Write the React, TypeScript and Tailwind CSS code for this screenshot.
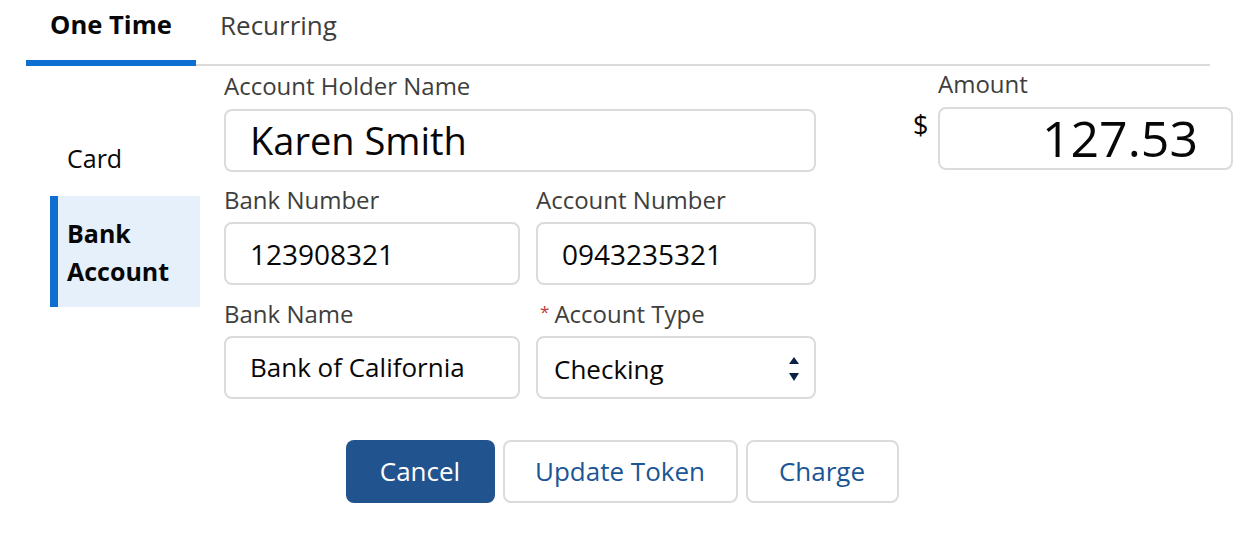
import React from "react";

const font = { fontFamily: '"Open Sans", "Noto Sans", sans-serif' };

function Label({ children, required }: { children: React.ReactNode; required?: boolean }) {
  return (
    <div className="h-[28px] leading-[28px] text-[24px] text-[#3e3e3c] whitespace-nowrap">
      {required && <span className="text-[#c23934] text-[17px] align-top ml-[4px] mr-[5px] relative top-[-2px]">*</span>}
      {children}
    </div>
  );
}

function Input({ children, w, cls }: { children: React.ReactNode; w: string; cls?: string }) {
  return (
    <div
      className={`${w} h-[63px] border-2 border-[#dddbda] rounded-[8px] flex items-center px-[24px] text-[#080707] whitespace-nowrap ${cls ?? "text-[26px]"}`}
    >
      {children}
    </div>
  );
}

export default function App() {
  return (
    <div className="w-[1244px] h-[548px] bg-white overflow-hidden" style={font}>
      {/* Tabs */}
      <div className="ml-[26px] w-[1184px] h-[66px] flex border-b-2 border-[#dddbda]">
        <div className="relative w-[170px] h-full flex items-start justify-center pt-[5px]">
          <span className="text-[25.6px] font-bold text-[#080707] leading-[40px]">One Time</span>
          <div className="absolute left-0 right-0 bottom-[-2px] h-[6px] bg-[#0f6fd1]" />
        </div>
        <div className="pl-[24px] pr-[24px] h-full flex items-start pt-[5px]">
          <span className="text-[26px] text-[#3e3e3c] leading-[40px]">Recurring</span>
        </div>
      </div>

      {/* Body */}
      <div className="flex pl-[50px]">
        {/* Left nav */}
        <div className="w-[150px] flex flex-col">
          <div className="mt-[73px] h-[38px] leading-[38px] pl-[17px] text-[25px] text-[#080707]">Card</div>
          <div className="mt-[19px] h-[111px] bg-[#e6f0fa] border-l-[8px] border-[#0f6fd1] pl-[9px] pt-[18px] text-[25px] font-bold leading-[38px] text-[#080707]">
            Bank
            <br />
            Account
          </div>
        </div>

        {/* Form */}
        <div className="ml-[24px] w-[592px] flex flex-col">
          <div className="mt-[6px]">
            <Label>Account Holder Name</Label>
          </div>
          <div className="mt-[9px]">
            <Input w="w-[592px]" cls="text-[38px]">Karen Smith</Input>
          </div>
          <div className="mt-[14px] flex gap-[16px]">
            <div className="flex flex-col">
              <Label>Bank Number</Label>
              <div className="mt-[8px]">
                <Input w="w-[296px]" cls="text-[28px]">123908321</Input>
              </div>
            </div>
            <div className="flex flex-col">
              <Label>Account Number</Label>
              <div className="mt-[8px]">
                <Input w="w-[280px]" cls="text-[28px]">0943235321</Input>
              </div>
            </div>
          </div>
          <div className="mt-[15px] flex gap-[16px]">
            <div className="flex flex-col">
              <Label>Bank Name</Label>
              <div className="mt-[8px]">
                <Input w="w-[296px]">Bank of California</Input>
              </div>
            </div>
            <div className="flex flex-col">
              <Label required>Account Type</Label>
              <div className="mt-[8px]">
                <div className="w-[280px] h-[63px] border-2 border-[#dddbda] rounded-[8px] flex items-center justify-between pl-[16px] pr-[14px] text-[26px] text-[#080707]">
                  <span className="mt-[4px]">Checking</span>
                  <svg width="12" height="30" viewBox="0 0 12 30" className="mt-[2px]">
                    <path d="M1 10 L6 3 L11 10 Z" fill="#0b2144" />
                    <path d="M1 19 L6 27 L11 19 Z" fill="#0b2144" />
                  </svg>
                </div>
              </div>
            </div>
          </div>
        </div>

        {/* Amount */}
        <div className="ml-[97px] flex flex-col">
          <div className="mt-[4px] pl-[25px]">
            <Label>Amount</Label>
          </div>
          <div className="mt-[9px] flex items-start">
            <div className="w-[25px] text-[27px] text-[#080707] leading-[30px] mt-[3px]">$</div>
            <div className="w-[295px] h-[63px] border-2 border-[#dddbda] rounded-[8px] flex items-center justify-end pr-[33px] text-[50px] text-[#080707]">
              127.53
            </div>
          </div>
        </div>
      </div>

      {/* Buttons */}
      <div className="mt-[41px] flex justify-center gap-[8px]">
        <button className="w-[149px] h-[63px] rounded-[8px] bg-[#21548f] text-white text-[26px]">Cancel</button>
        <button className="w-[235px] h-[63px] rounded-[8px] border-2 border-[#dddbda] bg-white text-[#1c5595] text-[26px]">
          Update Token
        </button>
        <button className="w-[153px] h-[63px] rounded-[8px] border-2 border-[#dddbda] bg-white text-[#1c5595] text-[26px]">
          Charge
        </button>
      </div>
    </div>
  );
}
